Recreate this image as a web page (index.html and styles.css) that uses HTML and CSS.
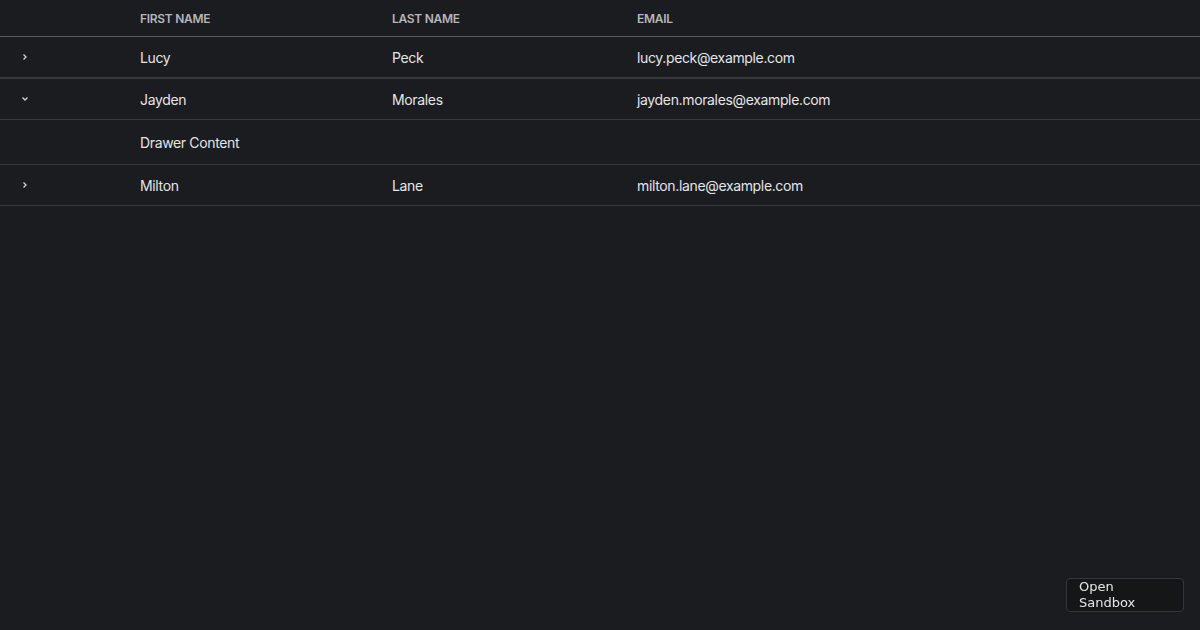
FILE: index.html
```html
<!DOCTYPE html>
<html>
<head>
<meta charset="utf-8">
<link rel="stylesheet" href="styles.css">
</head>
<body>
<table class="grid">
  <thead>
    <tr class="head">
      <th class="c-toggle"></th>
      <th class="c-first">First Name</th>
      <th class="c-last">Last Name</th>
      <th class="c-email">Email</th>
    </tr>
  </thead>
  <tbody>
    <tr class="row row-open-prev">
      <td class="c-toggle"><svg class="chev" width="8" height="8" viewBox="0 0 8 8"><path d="M2.5 1.5 L5 4 L2.5 6.5" fill="none" stroke="#d0d2d6" stroke-width="1.3"/></svg></td>
      <td>Lucy</td>
      <td>Peck</td>
      <td>lucy.peck@example.com</td>
    </tr>
    <tr class="row">
      <td class="c-toggle"><svg class="chev" width="8" height="8" viewBox="0 0 8 8"><path d="M1.5 2.5 L4 5 L6.5 2.5" fill="none" stroke="#d0d2d6" stroke-width="1.3"/></svg></td>
      <td>Jayden</td>
      <td>Morales</td>
      <td>jayden.morales@example.com</td>
    </tr>
    <tr class="drawer">
      <td class="c-toggle"></td>
      <td colspan="3">Drawer Content</td>
    </tr>
    <tr class="row">
      <td class="c-toggle"><svg class="chev" width="8" height="8" viewBox="0 0 8 8"><path d="M2.5 1.5 L5 4 L2.5 6.5" fill="none" stroke="#d0d2d6" stroke-width="1.3"/></svg></td>
      <td>Milton</td>
      <td>Lane</td>
      <td>milton.lane@example.com</td>
    </tr>
  </tbody>
</table>
<button class="sandbox">Open<br>Sandbox</button>
</body>
</html>
```
FILE: styles.css
```css
html, body {
  margin: 0;
  padding: 0;
  height: 100%;
  background: #1a1c20;
}
body {
  font-family: Inter, "Liberation Sans", sans-serif;
  color: #e4e5e7;
  font-size: 14px;
  letter-spacing: -0.35px;
}
.grid {
  width: 100%;
  border-collapse: collapse;
  table-layout: fixed;
}
th, td {
  padding: 0 12px;
  text-align: left;
}
.c-toggle { width: 104px; }
.c-first { width: 228px; }
.c-last { width: 221px; }
.head th {
  height: 36px;
  font-size: 12px;
  font-weight: 600;
  text-transform: uppercase;
  letter-spacing: -0.3px;
  color: #b4b6ba;
  border-bottom: 1px solid #5b5d61;
  vertical-align: middle;
}
.row td {
  height: 40px;
  border-bottom: 1px solid #36383c;
}
.row-open-prev td {
  border-bottom: 2px solid #36383c;
}
.drawer td {
  height: 44px;
  border-bottom: 1px solid #36383c;
}
td.c-toggle {
  padding-left: 21px;
}
.chev {
  display: block;
}
.sandbox {
  position: fixed;
  right: 16px;
  bottom: 18px;
  width: 118px;
  height: 34px;
  padding: 0 12px;
  text-align: left;
  background: #151618;
  border: 1px solid #35373b;
  border-radius: 4px;
  color: #e4e5e7;
  font-family: "DejaVu Sans", sans-serif;
  font-size: 13px;
  line-height: 16px;
  letter-spacing: 0;
}
```
